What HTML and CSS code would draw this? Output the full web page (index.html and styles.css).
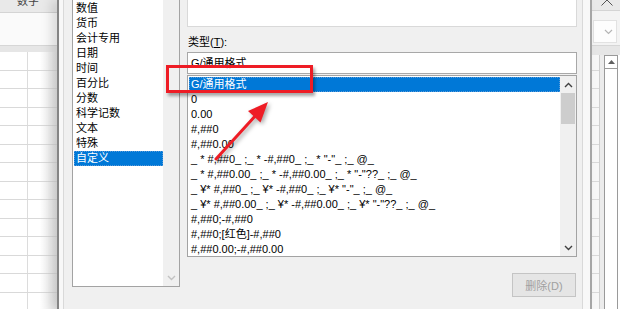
FILE: index.html
```html
<!DOCTYPE html>
<html lang="zh-CN">
<head>
    <meta charset="UTF-8">
    <title>设置单元格格式</title>
    <link rel="stylesheet" href="styles.css">
</head>
<body>
    <div class="screen">
        <div class="sheet sheet-left">
            <div class="tabbar"><span class="tab-label">数字</span></div>
            <div class="formula"></div>
            <div class="colhead"></div>
            <div class="rows">
                <div class="row first"><div class="cell"></div><div class="cell wide"></div></div>
                <div class="row"><div class="cell"></div><div class="cell wide"></div></div>
                <div class="row"><div class="cell"></div><div class="cell wide"></div></div>
                <div class="row"><div class="cell"></div><div class="cell wide"></div></div>
                <div class="row"><div class="cell"></div><div class="cell wide"></div></div>
                <div class="row"><div class="cell"></div><div class="cell wide"></div></div>
                <div class="row"><div class="cell"></div><div class="cell wide"></div></div>
                <div class="row"><div class="cell"></div><div class="cell wide"></div></div>
                <div class="row"><div class="cell"></div><div class="cell wide"></div></div>
                <div class="row"><div class="cell"></div><div class="cell wide"></div></div>
                <div class="row"><div class="cell"></div><div class="cell wide"></div></div>
                <div class="row"><div class="cell"></div><div class="cell wide"></div></div>
                <div class="row"><div class="cell"></div><div class="cell wide"></div></div>
                <div class="row"><div class="cell"></div><div class="cell wide"></div></div>
            </div>
        </div>

        <div class="dialog">
            <div class="page">
                <div class="cats">
                    <ul class="cat-list">
                        <li>数值</li>
                        <li>货币</li>
                        <li>会计专用</li>
                        <li>日期</li>
                        <li>时间</li>
                        <li>百分比</li>
                        <li>分数</li>
                        <li>科学记数</li>
                        <li>文本</li>
                        <li>特殊</li>
                        <li class="selected">自定义</li>
                    </ul>
                    <div class="vscroll">
                        <div class="vscroll-track"></div>
                        <div class="vscroll-btn">
                            <svg width="9" height="6" viewBox="0 0 9 6"><polyline points="1,1 4.5,4.5 8,1" fill="none" stroke="#c2c2c2" stroke-width="1.4"/></svg>
                        </div>
                    </div>
                </div>

                <div class="format">
                    <div class="sample"></div>
                    <div class="type-label">类型(<u>T</u>):</div>
                    <div class="type-input">G/通用格式</div>
                    <div class="code-box">
                        <ul class="code-list">
                            <li class="selected">G/通用格式</li>
                            <li>0</li>
                            <li>0.00</li>
                            <li>#,##0</li>
                            <li>#,##0.00</li>
                            <li>_ * #,##0_ ;_ * -#,##0_ ;_ * "-"_ ;_ @_</li>
                            <li>_ * #,##0.00_ ;_ * -#,##0.00_ ;_ * "-"??_ ;_ @_</li>
                            <li>_ ¥* #,##0_ ;_ ¥* -#,##0_ ;_ ¥* "-"_ ;_ @_</li>
                            <li>_ ¥* #,##0.00_ ;_ ¥* -#,##0.00_ ;_ ¥* "-"??_ ;_ @_</li>
                            <li>#,##0;-#,##0</li>
                            <li>#,##0;[红色]-#,##0</li>
                            <li>#,##0.00;-#,##0.00</li>
                        </ul>
                        <div class="vscroll">
                            <div class="vscroll-btn">
                                <svg width="9" height="6" viewBox="0 0 9 6"><polyline points="1,5 4.5,1.5 8,5" fill="none" stroke="#404040" stroke-width="1.4"/></svg>
                            </div>
                            <div class="vscroll-thumb"></div>
                            <div class="vscroll-track"></div>
                            <div class="vscroll-btn">
                                <svg width="9" height="6" viewBox="0 0 9 6"><polyline points="1,1 4.5,4.5 8,1" fill="none" stroke="#404040" stroke-width="1.4"/></svg>
                            </div>
                        </div>
                    </div>
                    <div class="actions">
                        <button class="btn" disabled>删除(D)</button>
                    </div>
                </div>
            </div>
        </div>

        <div class="sheet sheet-right">
            <div class="tabbar small">
                <svg width="28" height="10" viewBox="0 0 28 10"><polyline points="9.5,5.5 15,0 20.5,5.5" fill="none" stroke="#555" stroke-width="1"/></svg>
            </div>
            <div class="formula short">
                <div class="dropdown">
                    <svg width="9" height="6" viewBox="0 0 9 6"><polyline points="1,1 4.5,4.5 8,1" fill="none" stroke="#b5b5b5" stroke-width="1.2"/></svg>
                </div>
            </div>
            <div class="colhead tall"></div>
            <div class="right-body">
                <div class="mini-rows">
                    <div class="row first"></div>
                    <div class="row"></div>
                    <div class="row"></div>
                    <div class="row"></div>
                    <div class="row"></div>
                    <div class="row"></div>
                    <div class="row"></div>
                    <div class="row"></div>
                    <div class="row"></div>
                    <div class="row"></div>
                    <div class="row"></div>
                    <div class="row"></div>
                    <div class="row"></div>
                    <div class="row"></div>
                </div>
                <div class="mini-gap"></div>
                <div class="mini-scroll">
                    <div class="mini-up">
                        <svg width="9" height="6" viewBox="0 0 9 6"><polygon points="1,5 4.5,1 8,5" fill="#606060"/></svg>
                    </div>
                </div>
            </div>
        </div>

        <div class="callout"></div>
        <svg class="arrow" width="620" height="309" viewBox="0 0 620 309">
            <line x1="216" y1="159" x2="257" y2="114" stroke="#ee1c25" stroke-width="3" stroke-linecap="round"/>
            <polygon points="268,102 260.5,122.5 248,111" fill="#ee1c25"/>
        </svg>
    </div>
</body>
</html>
```

FILE: styles.css
```css
* {
    box-sizing: border-box;
}

body {
    margin: 0;
    background-color: #f0f0f0;
    font-family: "Liberation Sans", "Noto Sans CJK SC", sans-serif;
    font-size: 11px;
    color: #000;
}

.screen {
    position: relative;
    width: 620px;
    height: 309px;
    overflow: hidden;
    display: flex;
}

ul {
    list-style: none;
    margin: 0;
    padding: 0;
}

/* excel sheet behind the dialog */
.sheet {
    background-color: #fff;
    height: 309px;
    overflow: hidden;
}

.sheet-left {
    width: 57px;
}

.sheet-right {
    width: 28px;
}

.tabbar {
    height: 13px;
    background-color: #e9e9e9;
    border-bottom: 1px solid #d4d4d4;
    overflow: hidden;
    color: #444;
}

.tabbar.small {
    height: 11px;
}

.tabbar.small svg {
    display: block;
}

.tab-label {
    display: block;
    line-height: 12px;
    margin-top: -5px;
    padding-left: 17px;
}

.formula {
    height: 33px;
    background-color: #fafafa;
    border-bottom: 1px solid #d6d6d6;
}

.formula.short {
    height: 35px;
    background-color: #f3f3f3;
    padding: 9px 0 0 1px;
}

.dropdown {
    width: 24px;
    height: 23px;
    background-color: #fdfdfd;
    border: 1px solid #e2e2e2;
    display: flex;
    align-items: center;
    justify-content: center;
    padding-left: 6px;
}

.colhead {
    height: 6px;
    background-color: #e6e6e6;
}

.colhead.tall {
    height: 9px;
}

.row {
    display: flex;
    height: 18.5px;
    border-bottom: 1px solid #d9d9d9;
}

.cell {
    width: 28px;
    border-right: 1px solid #dcdcdc;
}

.cell.wide {
    flex: 1;
    border-right: none;
    background: linear-gradient(to right, #fff 40%, #e4e4e4);
}

.right-body {
    display: flex;
    height: 260px;
}

.mini-rows {
    width: 8px;
    background-color: #f7f7f7;
    border-right: 1px solid #cfcfcf;
}

.mini-rows .row.first {
    height: 15.5px;
}

.mini-gap {
    width: 4px;
    background-color: #ececec;
}

.mini-scroll {
    width: 14px;
    background-color: #fff;
    border: 1px solid #9a9a9a;
    border-bottom: none;
}

.mini-up {
    height: 13px;
    border-bottom: 1px solid #9a9a9a;
    display: flex;
    align-items: center;
    justify-content: center;
}

/* format cells dialog */
.dialog {
    width: 535px;
    background-color: #f8f8f8;
    border-left: 2px solid #858585;
    border-right: 2px solid #a6a6a6;
    padding: 0 7px 0 4px;
    box-shadow: -6px 0 10px rgba(0, 0, 0, 0.12);
    z-index: 1;
}

.page {
    display: flex;
    align-items: flex-start;
    gap: 7px;
    margin-top: -17px;
    height: 340px;
    padding: 0 5px 0 8px;
    background-color: #f0f0f0;
    border-left: 1px solid #d9d9d9;
    border-right: 1px solid #d9d9d9;
}

.cats {
    display: flex;
    width: 108px;
    height: 304px;
    background-color: #fff;
    border: 1px solid #a3a3a3;
}

.cat-list {
    width: 90px;
    padding: 17px 0 0 1px;
}

.cat-list li,
.code-list li {
    height: 15px;
    line-height: 15px;
    padding-left: 2px;
    white-space: nowrap;
}

.selected {
    background-color: #0078d7;
    color: #fff;
    outline: 1px dotted #5a9ad8;
    outline-offset: -1px;
}

.vscroll {
    width: 16px;
    display: flex;
    flex-direction: column;
    background-color: #f0f0f0;
}

.vscroll-track {
    flex: 1;
}

.vscroll-btn {
    height: 16px;
    display: flex;
    align-items: center;
    justify-content: center;
}

.vscroll-thumb {
    height: 31px;
    margin: 0 1px;
    background-color: #cdcdcd;
}

.format {
    width: 390px;
    display: flex;
    flex-direction: column;
}

.sample {
    height: 44px;
    background-color: #fff;
    border: 1px solid #d9d9d9;
}

.type-label {
    margin-top: 8px;
    line-height: 15px;
    padding-left: 1px;
}

.type-input {
    margin-top: 2px;
    height: 22px;
    line-height: 20px;
    padding-left: 3px;
    background-color: #fff;
    border: 1px solid #a8a8a8;
}

.code-box {
    display: flex;
    margin-top: 1px;
    height: 182px;
    background-color: #fff;
    border: 1px solid #a3a3a3;
}

.code-list {
    width: 372px;
    padding: 1px 0 0 1px;
    overflow: hidden;
}

.code-box .vscroll {
    padding-top: 1px;
}

.actions {
    display: flex;
    justify-content: flex-end;
    margin-top: 16px;
    padding-right: 1px;
}

.btn {
    width: 64px;
    height: 24px;
    padding: 0;
    font-family: inherit;
    font-size: 11px;
    color: #a0a0a0;
    background-color: #e5e5e5;
    border: 1px solid #c4c4c4;
}

/* annotation overlay */
.callout {
    position: absolute;
    left: 166px;
    top: 65px;
    width: 147px;
    height: 28px;
    border: 3px solid #ee1c25;
    box-shadow: 2px 3px 3px rgba(0, 0, 0, 0.35);
    z-index: 2;
}

.arrow {
    position: absolute;
    left: 0;
    top: 0;
    z-index: 2;
    pointer-events: none;
    filter: drop-shadow(2px 2px 2px rgba(0, 0, 0, 0.35));
}
```
